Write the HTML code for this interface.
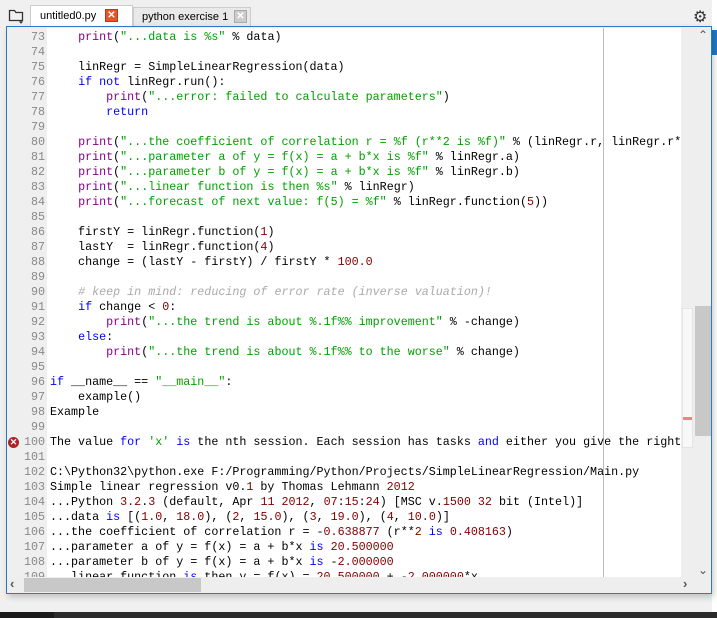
<!DOCTYPE html>
<html><head><meta charset="utf-8"><style>
*{margin:0;padding:0;box-sizing:border-box}
body{width:717px;height:618px;overflow:hidden;background:#f0f0f0;position:relative;font-family:"Liberation Sans",sans-serif}
.abs{position:absolute}
#code{position:absolute;left:7px;top:28px;width:674px;height:549px;background:#fff;overflow:hidden}
#gut{position:absolute;left:0;top:0;width:40px;height:549px;background:#efefef}
.ln{position:absolute;left:0;height:15px;line-height:15px;font-family:"Liberation Mono",monospace;font-size:11.7px;white-space:pre;color:#000}
.n{width:38px;text-align:right;color:#888;left:0}
.t{left:43px}
.p{color:#8a008a}.s{color:#00a000}.k{color:#0000ff}.m{color:#800000}.c{color:#aaa;font-style:italic}
</style></head><body>
<div class="abs" style="left:712px;top:0;width:5px;height:612px;background:#fff"></div>
<div class="abs" style="left:712px;top:30px;width:5px;height:25px;background:#1e7bc8"></div>
<!-- tabs -->
<svg class="abs" style="left:8px;top:8px" width="18" height="16" viewBox="0 0 18 16"><path d="M1.5 2.5h5l1.5 2h6.5v8h-13z" fill="none" stroke="#333" stroke-width="1.3"/><path d="M13 12v3M11.5 13.5l1.5 1.5 1.5-1.5" fill="none" stroke="#333" stroke-width="1"/></svg>
<div class="abs" style="left:30px;top:5px;width:103px;height:23px;background:#fff;border:1px solid #ccc;border-bottom:none"></div>
<div class="abs" style="left:40px;top:10px;font-size:11px;color:#000">untitled0.py</div>
<div class="abs" style="left:105px;top:9px;width:13px;height:13px;background:#e2562c;border:1px solid #b03c1c;color:#fff;font-size:10px;line-height:11px;text-align:center;font-weight:bold">✕</div>
<div class="abs" style="left:133px;top:7px;width:118px;height:19px;background:#e9e9e9;border:1px solid #ccc;border-bottom:none"></div>
<div class="abs" style="left:142px;top:11px;font-size:11px;color:#000">python exercise 1</div>
<div class="abs" style="left:234px;top:10px;width:13px;height:13px;background:#ccc;border:1px solid #aaa;color:#fff;font-size:10px;line-height:11px;text-align:center;font-weight:bold">✕</div>
<div class="abs" style="left:693px;top:7px;font-size:16px;color:#333">⚙</div>
<!-- editor frame -->
<div class="abs" style="left:6px;top:26px;width:706px;height:568px;border:1px solid #2a7ac6;background:#eee;box-shadow:2px 3px 6px rgba(0,0,0,.2)"></div>
<div id="code"><div id="gut"></div>
<div class="abs" style="left:596px;top:0;width:1px;height:549px;background:#bbb"></div>
<div class="ln n" style="top:2px">73</div><div class="ln t" style="top:2px">    <span class="p">print</span>(<span class="s">"...data is %s"</span> % data)</div>
<div class="ln n" style="top:17px">74</div>
<div class="ln n" style="top:32px">75</div><div class="ln t" style="top:32px">    linRegr = SimpleLinearRegression(data)</div>
<div class="ln n" style="top:47px">76</div><div class="ln t" style="top:47px">    <span class="k">if not</span> linRegr.run():</div>
<div class="ln n" style="top:62px">77</div><div class="ln t" style="top:62px">        <span class="p">print</span>(<span class="s">"...error: failed to calculate parameters"</span>)</div>
<div class="ln n" style="top:77px">78</div><div class="ln t" style="top:77px">        <span class="k">return</span></div>
<div class="ln n" style="top:92px">79</div>
<div class="ln n" style="top:107px">80</div><div class="ln t" style="top:107px">    <span class="p">print</span>(<span class="s">"...the coefficient of correlation r = %f (r**2 is %f)"</span> % (linRegr.r, linRegr.r*</div>
<div class="ln n" style="top:122px">81</div><div class="ln t" style="top:122px">    <span class="p">print</span>(<span class="s">"...parameter a of y = f(x) = a + b*x is %f"</span> % linRegr.a)</div>
<div class="ln n" style="top:137px">82</div><div class="ln t" style="top:137px">    <span class="p">print</span>(<span class="s">"...parameter b of y = f(x) = a + b*x is %f"</span> % linRegr.b)</div>
<div class="ln n" style="top:152px">83</div><div class="ln t" style="top:152px">    <span class="p">print</span>(<span class="s">"...linear function is then %s"</span> % linRegr)</div>
<div class="ln n" style="top:167px">84</div><div class="ln t" style="top:167px">    <span class="p">print</span>(<span class="s">"...forecast of next value: f(5) = %f"</span> % linRegr.function(<span class="m">5</span>))</div>
<div class="ln n" style="top:182px">85</div>
<div class="ln n" style="top:197px">86</div><div class="ln t" style="top:197px">    firstY = linRegr.function(<span class="m">1</span>)</div>
<div class="ln n" style="top:212px">87</div><div class="ln t" style="top:212px">    lastY  = linRegr.function(<span class="m">4</span>)</div>
<div class="ln n" style="top:227px">88</div><div class="ln t" style="top:227px">    change = (lastY - firstY) / firstY * <span class="m">100.0</span></div>
<div class="ln n" style="top:242px">89</div>
<div class="ln n" style="top:257px">90</div><div class="ln t" style="top:257px">    <span class="c"># keep in mind: reducing of error rate (inverse valuation)!</span></div>
<div class="ln n" style="top:272px">91</div><div class="ln t" style="top:272px">    <span class="k">if</span> change &lt; <span class="m">0</span>:</div>
<div class="ln n" style="top:287px">92</div><div class="ln t" style="top:287px">        <span class="p">print</span>(<span class="s">"...the trend is about %.1f%% improvement"</span> % -change)</div>
<div class="ln n" style="top:302px">93</div><div class="ln t" style="top:302px">    <span class="k">else</span>:</div>
<div class="ln n" style="top:317px">94</div><div class="ln t" style="top:317px">        <span class="p">print</span>(<span class="s">"...the trend is about %.1f%% to the worse"</span> % change)</div>
<div class="ln n" style="top:332px">95</div>
<div class="ln n" style="top:347px">96</div><div class="ln t" style="top:347px"><span class="k">if</span> __name__ == <span class="s">"__main__"</span>:</div>
<div class="ln n" style="top:362px">97</div><div class="ln t" style="top:362px">    example()</div>
<div class="ln n" style="top:377px">98</div><div class="ln t" style="top:377px">Example</div>
<div class="ln n" style="top:392px">99</div>
<div class="abs" style="left:1px;top:409px;width:11px;height:11px;border-radius:50%;background:#b22222;color:#fff;font-size:9px;line-height:11px;text-align:center;font-weight:bold">✕</div>
<div class="ln n" style="top:407px">100</div><div class="ln t" style="top:407px">The value <span class="k">for</span> <span class="s">'x'</span> <span class="k">is</span> the nth session. Each session has tasks <span class="k">and</span> either you give the right</div>
<div class="ln n" style="top:422px">101</div>
<div class="ln n" style="top:437px">102</div><div class="ln t" style="top:437px">C:\Python32\python.exe F:/Programming/Python/Projects/SimpleLinearRegression/Main.py</div>
<div class="ln n" style="top:452px">103</div><div class="ln t" style="top:452px">Simple linear regression v0.<span class="m">1</span> by Thomas Lehmann <span class="m">2012</span></div>
<div class="ln n" style="top:467px">104</div><div class="ln t" style="top:467px">...Python <span class="m">3.2</span>.<span class="m">3</span> (default, Apr <span class="m">11</span> <span class="m">2012</span>, <span class="m">07</span>:<span class="m">15</span>:<span class="m">24</span>) [MSC v.<span class="m">1500</span> <span class="m">32</span> bit (Intel)]</div>
<div class="ln n" style="top:482px">105</div><div class="ln t" style="top:482px">...data <span class="k">is</span> [(<span class="m">1.0</span>, <span class="m">18.0</span>), (<span class="m">2</span>, <span class="m">15.0</span>), (<span class="m">3</span>, <span class="m">19.0</span>), (<span class="m">4</span>, <span class="m">10.0</span>)]</div>
<div class="ln n" style="top:497px">106</div><div class="ln t" style="top:497px">...the coefficient of correlation r = -<span class="m">0.638877</span> (r**<span class="m">2</span> <span class="k">is</span> <span class="m">0.408163</span>)</div>
<div class="ln n" style="top:512px">107</div><div class="ln t" style="top:512px">...parameter a of y = f(x) = a + b*x <span class="k">is</span> <span class="m">20.500000</span></div>
<div class="ln n" style="top:527px">108</div><div class="ln t" style="top:527px">...parameter b of y = f(x) = a + b*x <span class="k">is</span> -<span class="m">2.000000</span></div>
<div class="ln n" style="top:542px">109</div><div class="ln t" style="top:542px">...linear function <span class="k">is</span> then y = f(x) = <span class="m">20.500000</span> + -<span class="m">2.000000</span>*x</div>
</div>
<div class="abs" style="left:681px;top:28px;width:14px;height:549px;background:#eee"></div>
<div class="abs" style="left:682px;top:308px;width:11px;height:140px;background:#f8f8f8;border:1px solid #e4e4e4"></div>
<div class="abs" style="left:683px;top:417px;width:9px;height:3px;background:#e08a80"></div>
<div class="abs" style="left:695px;top:28px;width:16px;height:549px;background:#eee"></div>
<div class="abs" style="left:695px;top:306px;width:16px;height:130px;background:#c8c8c8"></div>
<div class="abs" style="left:698px;top:28px;font-size:12px;color:#555">⌃</div>
<div class="abs" style="left:698px;top:563px;font-size:12px;color:#555">⌄</div>
<div class="abs" style="left:7px;top:577px;width:704px;height:16px;background:#eee"></div>
<div class="abs" style="left:24px;top:578px;width:177px;height:14px;background:#c8c8c8"></div>
<div class="abs" style="left:10px;top:576px;font-size:13px;color:#555;font-weight:bold">‹</div>
<div class="abs" style="left:683px;top:576px;font-size:13px;color:#555;font-weight:bold">›</div>
<div class="abs" style="left:0;top:612px;width:717px;height:6px;background:#2b2b2b"></div>
<div class="abs" style="left:0;top:612px;width:54px;height:6px;background:#1a1a1a"></div>
</body></html>
